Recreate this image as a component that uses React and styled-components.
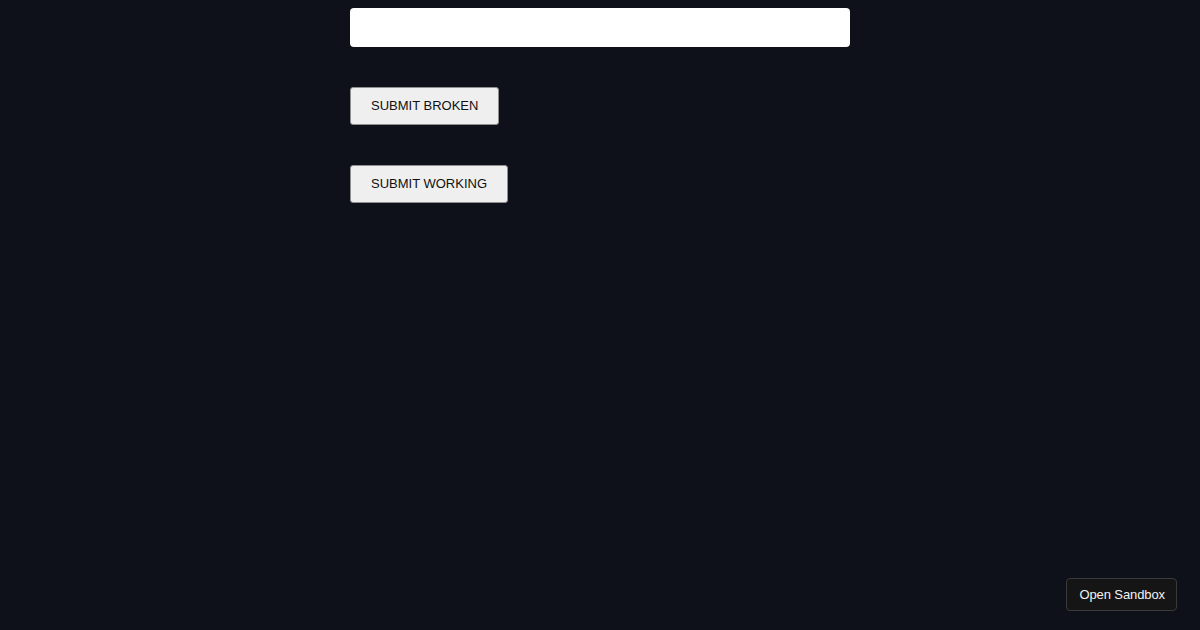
import styled, { createGlobalStyle } from "styled-components";

const GlobalStyle = createGlobalStyle`
  html, body {
    margin: 0;
    padding: 0;
    background: #0e111a;
    height: 100%;
  }
  body {
    font-family: "Liberation Sans", Arial, sans-serif;
  }
`;

const Page = styled.div`
  min-height: 630px;
  padding-top: 8px;
  box-sizing: border-box;
  display: flex;
  justify-content: center;
`;

const Form = styled.form`
  width: 500px;
  display: flex;
  flex-direction: column;
  align-items: flex-start;
  gap: 40px;
`;

const Input = styled.input`
  width: 500px;
  height: 39px;
  box-sizing: border-box;
  border: none;
  border-radius: 4px;
  background: #ffffff;
  padding: 0 12px;
  font-size: 14px;
  outline: none;
`;

const Button = styled.button`
  height: 38px;
  box-sizing: border-box;
  padding: 0 20px 1px;
  background: #efefef;
  border: 1px solid #8f8f8f;
  border-radius: 3px;
  color: #111;
  font-family: "Liberation Sans", Arial, sans-serif;
  font-size: 13px;
  cursor: pointer;
`;

const SandboxLink = styled.a`
  position: fixed;
  right: 23px;
  bottom: 19px;
  height: 33px;
  padding: 0 11px 0 12px;
  display: flex;
  align-items: center;
  box-sizing: border-box;
  background: #151515;
  border: 1px solid #3a3a3a;
  border-radius: 4px;
  color: #f2f2f2;
  font-size: 13px;
  letter-spacing: -0.1px;
  text-decoration: none;
`;

export default function App() {
  return (
    <>
      <GlobalStyle />
      <Page>
        <Form onSubmit={(e) => e.preventDefault()}>
          <Input type="text" />
          <Button type="button">SUBMIT BROKEN</Button>
          <Button type="button">SUBMIT WORKING</Button>
        </Form>
      </Page>
      <SandboxLink href="#">Open Sandbox</SandboxLink>
    </>
  );
}
